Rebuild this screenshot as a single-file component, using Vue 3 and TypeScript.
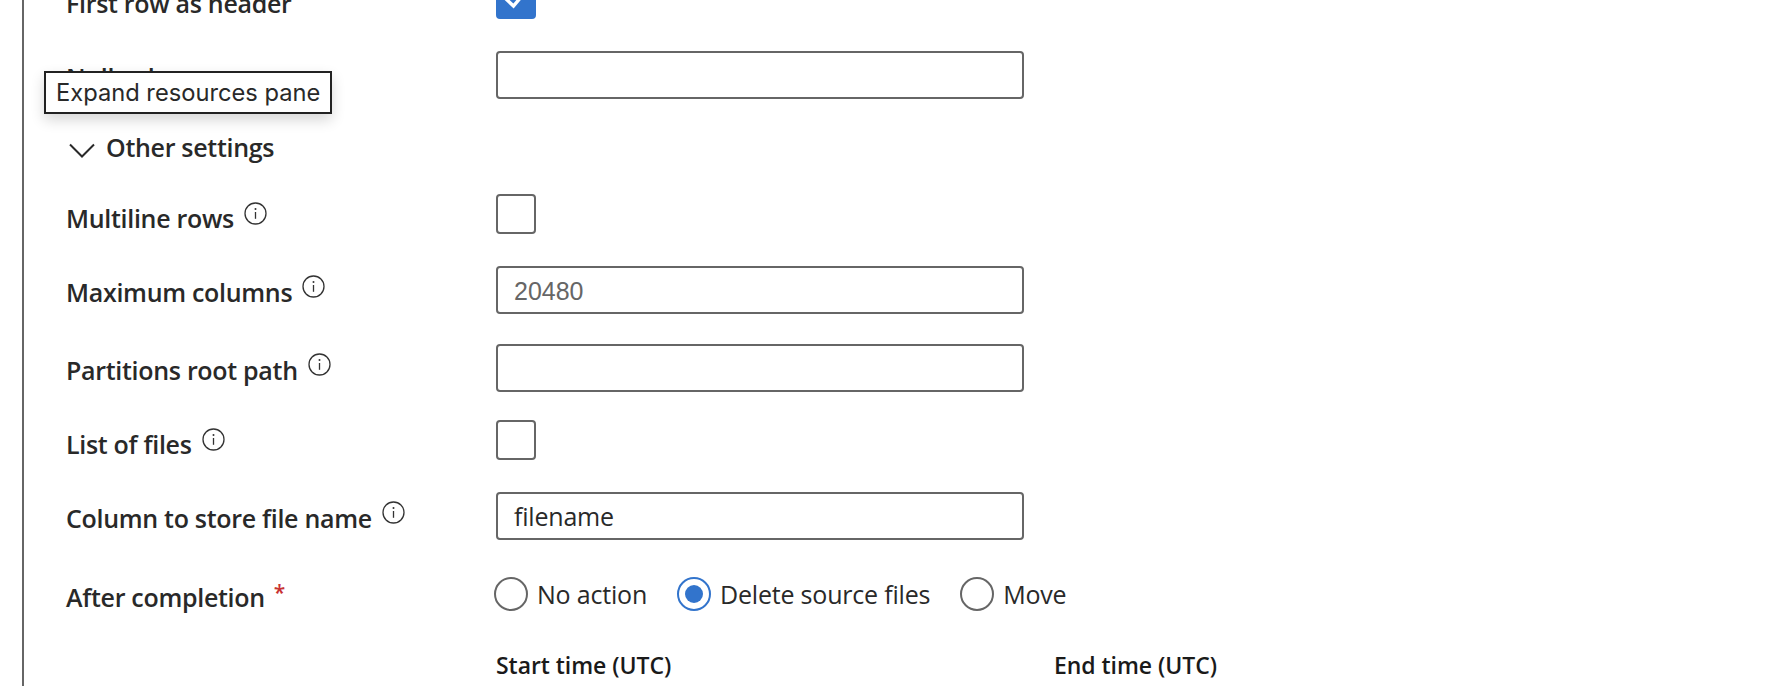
<template>
  <div class="page">
    <svg class="defs" width="0" height="0">
      <symbol id="info" viewBox="0 0 23 23">
        <circle cx="11.5" cy="11.5" r="10.5" fill="none" stroke="#333" stroke-width="1.3" />
        <circle cx="11.5" cy="7" r="1" fill="#333" />
        <path d="M11.5 10v6.8" stroke="#333" stroke-width="1.3" fill="none" />
      </symbol>
    </svg>
    <div class="pane">
      <div class="form">
        <div class="row row-check">
          <div class="label">First row as header</div>
          <div class="checkbox checked">
            <svg width="36" height="36" viewBox="0 0 36 36">
              <path d="M7 17l8.5 8L29 9" fill="none" stroke="#fff" stroke-width="3.4" />
            </svg>
          </div>
        </div>
        <div class="row row-input">
          <div class="label">Null value</div>
          <div class="input"></div>
        </div>
        <div class="section">
          <svg class="chevron" width="26" height="15" viewBox="0 0 26 15">
            <path d="M1 1.5l12 12 12-12" fill="none" stroke="#292929" stroke-width="2" />
          </svg>
          <span class="section-title">Other settings</span>
        </div>
        <div class="row row-multiline">
          <div class="label">Multiline rows<svg class="info"><use href="#info" /></svg></div>
          <div class="checkbox"></div>
        </div>
        <div class="row row-max">
          <div class="label">Maximum columns<svg class="info"><use href="#info" /></svg></div>
          <div class="input muted">20480</div>
        </div>
        <div class="row row-root">
          <div class="label">Partitions root path<svg class="info"><use href="#info" /></svg></div>
          <div class="input"></div>
        </div>
        <div class="row row-files">
          <div class="label">List of files<svg class="info"><use href="#info" /></svg></div>
          <div class="checkbox"></div>
        </div>
        <div class="row row-name">
          <div class="label">Column to store file name<svg class="info"><use href="#info" /></svg></div>
          <div class="input">filename</div>
        </div>
        <div class="row row-after">
          <div class="label">After completion<span class="required">*</span></div>
          <div class="radios">
            <div v-for="opt in options" :key="opt" class="radio-item">
              <span :class="['radio', { on: opt === selected }]"></span>
              <span>{{ opt }}</span>
            </div>
          </div>
        </div>
        <div class="row row-times">
          <div></div>
          <div class="times">
            <div class="time">Start time (UTC)</div>
            <div class="time">End time (UTC)</div>
          </div>
        </div>
      </div>
      <div class="tooltip">Expand resources pane</div>
    </div>
  </div>
</template>

<script setup lang="ts">
const options: string[] = ['No action', 'Delete source files', 'Move']
const selected = 'Delete source files'
</script>

<style scoped>
.page {
  height: 686px;
  overflow: hidden;
  padding-left: 22px;
  background: #fff;
  font-family: "Open Sans", "Noto Sans", sans-serif;
  color: #292929;
}

.defs {
  position: absolute;
}

.pane {
  position: relative;
  display: flow-root;
  height: 686px;
  border-left: 2px solid #666;
  padding-left: 42px;
}

.form {
  margin-top: -21px;
}

.row {
  display: grid;
  grid-template-columns: 430px 1fr;
  align-items: start;
}

.row-input { margin-top: 32px; }
.row-multiline { margin-top: 28px; }
.row-max { margin-top: 32px; }
.row-root { margin-top: 30px; }
.row-files { margin-top: 28px; }
.row-name { margin-top: 32px; }
.row-after { margin-top: 37px; }
.row-times { margin-top: 38px; }

.label {
  display: flex;
  align-items: center;
  height: 48px;
  padding-top: 3px;
  box-sizing: border-box;
  font-size: 25px;
  font-weight: 600;
  letter-spacing: -0.3px;
  white-space: nowrap;
}

.row-check .label,
.row-multiline .label,
.row-files .label {
  height: 40px;
  padding-top: 8px;
}

.row-after .label {
  height: 34px;
  padding-top: 6px;
}

.info {
  width: 23px;
  height: 23px;
  margin-left: 10px;
  margin-bottom: 10px;
  flex: none;
}

.required {
  color: #c83232;
  font-size: 21px;
  margin-left: 9px;
  margin-bottom: 10px;
}

.checkbox {
  width: 40px;
  height: 40px;
  box-sizing: border-box;
  border: 2px solid #666;
  border-radius: 4px;
}

.checkbox.checked {
  background: #3274cc;
  border-color: #3274cc;
}

.checkbox svg {
  display: block;
}

.input {
  width: 528px;
  height: 48px;
  box-sizing: border-box;
  border: 2px solid #666;
  border-radius: 4px;
  padding: 0 16px;
  display: flex;
  align-items: center;
  font-size: 25px;
  letter-spacing: -0.2px;
}

.input.muted {
  color: #666;
  padding-top: 2px;
  font-family: "Liberation Sans", sans-serif;
  letter-spacing: 0;
}

.section {
  display: flex;
  align-items: center;
  height: 36px;
  margin-top: 31px;
  padding-left: 3px;
  font-size: 25px;
  font-weight: 600;
  letter-spacing: -0.3px;
}

.section-title {
  margin-bottom: 2px;
}

.chevron {
  margin-right: 11px;
  margin-top: 4px;
}

.radios {
  display: flex;
  height: 34px;
  margin-left: -2px;
  font-size: 25px;
  letter-spacing: -0.2px;
}

.radio-item {
  display: flex;
  align-items: center;
  gap: 9px;
  margin-right: 30px;
}

.radio {
  position: relative;
  width: 34px;
  height: 34px;
  box-sizing: border-box;
  border: 2px solid #666;
  border-radius: 50%;
}

.radio.on {
  border-color: #3274cc;
}

.radio.on::after {
  content: "";
  position: absolute;
  inset: 6px;
  border-radius: 50%;
  background: #3274cc;
}

.times {
  display: flex;
  font-size: 23px;
  font-weight: 600;
  letter-spacing: -0.05px;
  color: #1a1a1a;
}

.time {
  width: 558px;
}

.tooltip {
  position: absolute;
  left: 20px;
  top: 71px;
  width: 288px;
  height: 43px;
  box-sizing: border-box;
  border: 2px solid #222;
  background: #fff;
  padding-left: 10px;
  display: flex;
  align-items: center;
  font-family: Inter, "Liberation Sans", sans-serif;
  font-size: 23.7px;
  color: #292929;
  white-space: nowrap;
  box-shadow: 0 6px 14px rgba(0, 0, 0, 0.16);
}
</style>
